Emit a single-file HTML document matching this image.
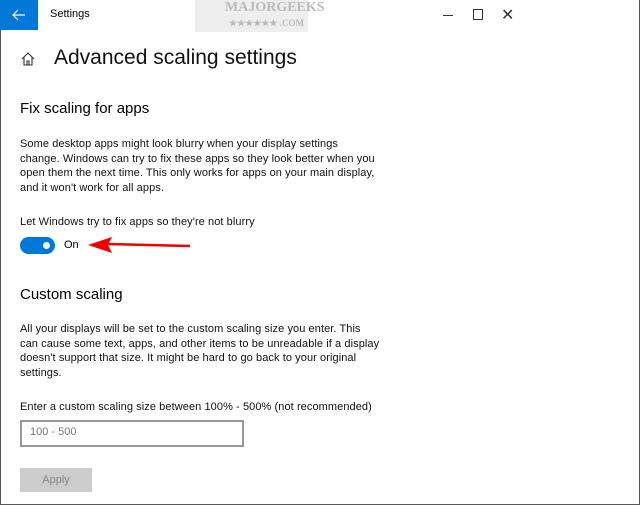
<!DOCTYPE html>
<html><head><style>
body{margin:0;width:640px;height:506px;overflow:hidden;background:#fff;font-family:"Liberation Sans",sans-serif;color:#000;position:relative}
.b{position:absolute;left:0;top:0;width:638px;height:504px;border:1px solid #555;border-top:none}
.t{position:absolute;white-space:nowrap}
p{position:absolute;left:20px;margin:0;font-size:11px;line-height:14.5px;width:600px;color:#111;letter-spacing:0.08px}
</style></head><body>
<div class="b"></div>
<div style="position:absolute;left:0;top:0;width:38px;height:30px;background:#0078d7"></div>
<svg style="position:absolute;left:12px;top:9px" width="14" height="12"><path d="M1 6H13M6 1L1 6L6 11" stroke="#fff" stroke-width="1.2" fill="none"/></svg>
<div class="t" style="left:50px;top:8px;font-size:11px">Settings</div>
<div style="position:absolute;left:195px;top:0;width:113px;height:32px;background:#eee;color:#bbb;font:bold 14px 'Liberation Serif',serif;text-align:center;line-height:15px"><span style="margin-left:30px">MAJORGEEKS</span><br><span style="font-size:9px;margin-left:30px">★★★★★★ .COM</span></div>
<div style="position:absolute;left:443px;top:15px;width:10px;height:1px;background:#333"></div>
<div style="position:absolute;left:473px;top:9px;width:8px;height:9px;border:1px solid #333"></div>
<div class="t" style="left:501px;top:5px;font-size:16px;color:#333">✕</div>
<svg style="position:absolute;left:20px;top:51px" width="16" height="16"><path d="M2 8L8 2L14 8M4 6V14H12V6M7 14V10H9V14" stroke="#333" fill="none" stroke-width="1.1"/></svg>
<div class="t" style="left:54px;top:46px;font-size:21px;color:#111">Advanced scaling settings</div>
<div class="t" style="left:20px;top:100px;font-size:15px">Fix scaling for apps</div>
<p style="top:137px">Some desktop apps might look blurry when your display settings<br>change. Windows can try to fix these apps so they look better when you<br>open them the next time. This only works for apps on your main display,<br>and it won't work for all apps.</p>
<p style="top:215px">Let Windows try to fix apps so they're not blurry</p>
<div style="position:absolute;left:20px;top:237px;width:35px;height:17px;border-radius:9px;background:#0078d7"></div>
<div style="position:absolute;left:43px;top:242px;width:7px;height:7px;border-radius:50%;background:#fff"></div>
<div class="t" style="left:64px;top:239px;font-size:11px">On</div>
<svg style="position:absolute;left:86px;top:236px" width="106" height="20"><path d="M104 10L22 8" stroke="#e00" stroke-width="2.5"/><path d="M2 9L26 1L22 9L26 17Z" fill="#e00"/></svg>
<div class="t" style="left:20px;top:286px;font-size:15px">Custom scaling</div>
<p style="top:322px">All your displays will be set to the custom scaling size you enter. This<br>can cause some text, apps, and other items to be unreadable if a display<br>doesn't support that size. It might be hard to go back to your original<br>settings.</p>
<p style="top:400px">Enter a custom scaling size between 100% - 500% (not recommended)</p>
<div style="position:absolute;left:20px;top:420px;width:220px;height:23px;border:2px solid #999"></div>
<div class="t" style="left:30px;top:426px;font-size:11px;color:#777">100 - 500</div>
<div style="position:absolute;left:20px;top:468px;width:72px;height:24px;background:#ccc;color:#888;font-size:11px;text-align:center;line-height:24px">Apply</div>
</body></html>
